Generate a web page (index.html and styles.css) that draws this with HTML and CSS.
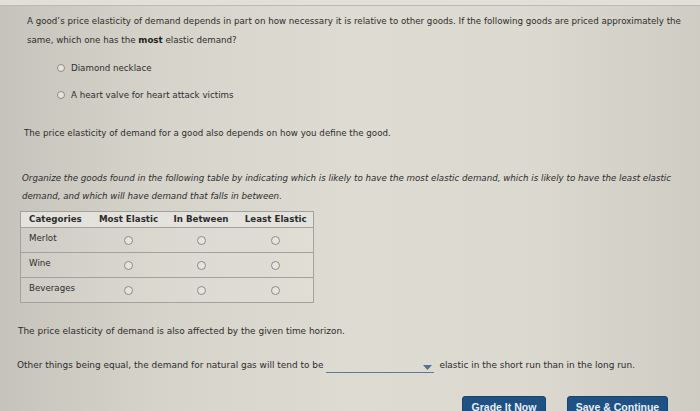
FILE: index.html
```html
<!DOCTYPE html>
<html>
<head>
<meta charset="utf-8">
<link rel="stylesheet" href="styles.css">
</head>
<body>
<div class="topbar"></div>
<main class="page">
  <p class="intro">A good’s price elasticity of demand depends in part on how necessary it is relative to other goods. If the following goods are priced approximately the same, which one has the <b>most</b> elastic demand?</p>
  <ul class="choices">
    <li class="choice"><span class="radio"></span>Diamond necklace</li>
    <li class="choice second"><span class="radio"></span>A heart valve for heart attack victims</li>
  </ul>
  <p class="plain p-define">The price elasticity of demand for a good also depends on how you define the good.</p>
  <p class="instr">Organize the goods found in the following table by indicating which is likely to have the most elastic demand, which is likely to have the least elastic demand, and which will have demand that falls in between.</p>
  <table class="grid">
    <colgroup><col class="c1"><col class="c2"><col class="c3"><col class="c4"></colgroup>
    <thead>
      <tr><th class="cat">Categories</th><th>Most Elastic</th><th>In Between</th><th>Least Elastic</th></tr>
    </thead>
    <tbody>
      <tr><td class="cat">Merlot</td><td><span class="radio"></span></td><td><span class="radio"></span></td><td><span class="radio"></span></td></tr>
      <tr><td class="cat">Wine</td><td><span class="radio"></span></td><td><span class="radio"></span></td><td><span class="radio"></span></td></tr>
      <tr><td class="cat">Beverages</td><td><span class="radio"></span></td><td><span class="radio"></span></td><td><span class="radio"></span></td></tr>
    </tbody>
  </table>
  <p class="plain p-time">The price elasticity of demand is also affected by the given time horizon.</p>
  <p class="plain p-gas"><span>Other things being equal, the demand for natural gas will tend to be</span><span class="dropdown"><svg class="caret" width="9" height="5" viewBox="0 0 9 5"><path d="M0 0 H9 L4.5 5 Z" fill="#4f7396"/></svg></span><span>elastic in the short run than in the long run.</span></p>
  <div class="actions">
    <button class="btn grade">Grade It Now</button>
    <button class="btn save">Save &amp; Continue</button>
  </div>
</main>
</body>
</html>
```

FILE: styles.css
```css
html, body {
  margin: 0;
  padding: 0;
  height: 411px;
  overflow: hidden;
}
body {
  background: linear-gradient(90deg, #c6c3bc 0%, #d6d3ca 22%, #dedbd2 50%, #dcd9d0 75%, #cfccc3 100%);
  font-family: "DejaVu Sans", Verdana, sans-serif;
  font-size: 8.7px;
  color: #2c2c2c;
}
.topbar {
  height: 5px;
  background: #e2dfd8;
  border-bottom: 1px solid #bdbab3;
}
.page {
  padding: 0 0 0 17px;
}
p { margin: 0; line-height: 18px; }
.intro {
  margin: 6px 0 0 10px;
  width: 660px;
  line-height: 19px;
}
.intro b { font-weight: bold; color: #1f1f1f; }
.choices {
  list-style: none;
  margin: 10px 0 0 0;
  padding: 0 0 0 40px;
}
.choice {
  display: flex;
  align-items: center;
  gap: 6px;
  height: 16px;
  line-height: 16px;
}
.choice.second { margin-top: 11px; }
.radio {
  display: inline-block;
  width: 8px;
  height: 8px;
  border: 1px solid #8c8b87;
  border-radius: 50%;
  background: #e6e4df;
  box-sizing: border-box;
  flex: none;
}
.p-define {
  margin: 21px 0 0 7px;
}
.instr {
  margin: 27px 0 0 5px;
  font-style: italic;
  width: 660px;
}
.grid {
  margin: 6px 0 0 3px;
  border-collapse: collapse;
  border: 1px solid #a3a19c;
  table-layout: fixed;
  width: 294px;
  background: rgba(255, 255, 255, 0.12);
}
.c1 { width: 73px; }
.c2 { width: 70px; }
.c3 { width: 75px; }
.c4 { width: 75px; }
.grid th {
  font-weight: bold;
  height: 15px;
  padding: 0;
  background: #e4e2dc;
  border-bottom: 1px solid #a3a19c;
  text-align: center;
  white-space: nowrap;
  line-height: 15px;
}
.grid td {
  height: 24px;
  border-bottom: 1px solid #a3a19c;
  text-align: center;
  vertical-align: middle;
  padding: 0;
  line-height: 10px;
}
.grid td .radio { vertical-align: middle; width: 9px; height: 9px; }
.grid .cat {
  text-align: left;
  padding-left: 8px;
}
.grid td.cat { vertical-align: top; padding-top: 5px; height: 19px; }
.p-time {
  margin: 19px 0 0 1px;
  font-size: 8.95px;
}
.p-gas {
  margin: 16px 0 0 0;
  display: flex;
  align-items: center;
  white-space: nowrap;
  font-size: 8.95px;
}
.dropdown {
  display: flex;
  align-items: flex-end;
  justify-content: flex-end;
  box-sizing: border-box;
  width: 108px;
  height: 12px;
  margin: 4px 5px 0 3px;
  border-bottom: 1px solid #5b7a99;
  padding: 0 2px 2px 0;
}
.caret { display: block; }
.actions {
  display: flex;
  gap: 21px;
  margin: 22px 0 0 445px;
}
.btn {
  font-family: "Liberation Sans", Arial, sans-serif;
  font-weight: bold;
  font-size: 10.5px;
  color: #e9eef4;
  background: #1f5283;
  border: 1px solid #17436d;
  border-radius: 3px;
  height: 22px;
  padding: 0;
  line-height: 20px;
  text-align: center;
}
.btn.grade { width: 84px; }
.btn.save { width: 101px; }
```
